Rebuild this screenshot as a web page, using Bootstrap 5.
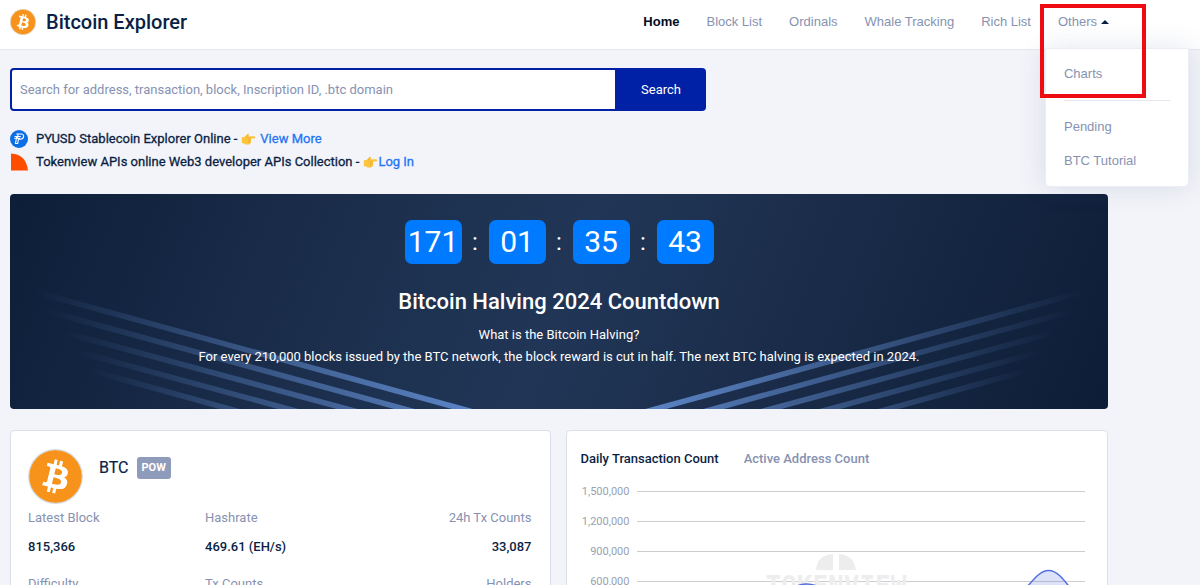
<!DOCTYPE html>
<html lang="en">
<head>
<meta charset="utf-8">
<meta name="viewport" content="width=device-width, initial-scale=1">
<title>Bitcoin Explorer</title>
<link href="https://cdn.jsdelivr.net/npm/bootstrap@5.3.0/dist/css/bootstrap.min.css" rel="stylesheet">
<style>
:root { --ink: #0b1f44; --muted: #8792b2; --page: #f3f4f9; --edge: #dcdfe9; --blue: #0021a5; }
body { font-family: Roboto, "Liberation Sans", sans-serif; font-size: 13px; line-height: 20px; color: var(--ink); background: var(--page); }
a { text-decoration: none; }
.site-header { background: #fff; border-bottom: 1px solid #e6e8ef; height: 50px; padding: 0 91px 6px 10px; }
.brand { font-size: 20px; font-weight: 500; line-height: 24px; color: var(--ink); gap: 10px; }
.site-nav { gap: 27px; font-family: "Liberation Sans", sans-serif; }
.site-nav a { color: var(--muted); }
.site-nav a.current { color: #000c22; font-weight: 700; }
.others-toggle::after { display: none; }
.caret-up { border: 4px solid transparent; border-top: 0; border-bottom: 4px solid var(--ink); margin-left: 4px; }
.others-menu { top: 36px; left: -13px; width: 144px; min-width: 0; padding: 14px 18px; border: 1px solid #eceef5; border-radius: 0 0 5px 5px; font-size: 13px; box-shadow: 0 0 28px rgba(60,75,130,.14); }
.others-menu .dropdown-item { padding: 0; line-height: 22px; background: none; color: var(--muted); }
.others-menu .dropdown-divider { margin: 15px 0; border-color: #e4e6ee; opacity: 1; }
.highlight-box { position: absolute; left: -18px; top: -8px; width: 106px; height: 94px; border: 4px solid #ee0c12; z-index: 1100; pointer-events: none; }
.page-main { padding: 18px 92px 0 10px; }
.search-form { max-width: 696px; height: 43px; }
.search-form .form-control { border: 2px solid var(--blue); border-radius: 4px 0 0 4px; padding: 0 8px; font-size: 13px; color: var(--ink); }
.search-form .form-control::placeholder { color: var(--muted); }
.search-form .btn { width: 90px; background: var(--blue); color: #fff; font-size: 13px; border-radius: 0 4px 4px 0; }
.notices { margin-top: 16px; -webkit-text-stroke: .3px; }
.notices li { line-height: 23px; }
.notices svg { flex: none; }
.notices a { color: #2474f6; }
.banner { margin-top: 21px; height: 215px; border-radius: 4px; color: #fff; background: linear-gradient(112deg, #0d1e38 0%, #1b2e4c 30%, #213657 50%, #1a2c49 70%, #0d1d37 100%); padding-top: 26px; }
.rays { position: absolute; inset: 0; width: 100%; height: 100%; }
.timer { gap: 10px; font-size: 30px; line-height: 44px; }
.timer-cell { width: 57px; border-radius: 7px; background: #007bff; }
.timer-colon { font-size: 24px; width: 7px; }
.banner h1 { font-size: 22px; line-height: 28px; font-weight: 500; margin: 24px 0 8px; }
.banner p { line-height: 22px; }
.panels { margin-top: 21px; display: grid; grid-template-columns: 541fr 543fr; gap: 15px; }
.panel { border: 1px solid var(--edge); border-radius: 4px; height: 330px; }
.coin-panel { padding: 18px 18px 0 17px; }
.coin-name { font-size: 16px; line-height: 22px; -webkit-text-stroke: .2px; }
.coin-tag { background: #8f9bba; font-size: 11px; line-height: 14px; padding: 4px 5px; border-radius: 3px; }
.stats { display: grid; grid-template-columns: 177px 1fr 1fr; row-gap: 17px; margin-top: 4px; }
.stats dt { font-weight: 400; color: var(--muted); }
.stats dd { font-weight: 500; margin: 9px 0 0; }
.chart-panel { padding: 18px 22px 0 14px; }
.chart-tabs { gap: 25px; font-weight: 500; }
.chart-tabs button { padding: 0; border: 0; background: none; font-weight: 500; color: var(--muted); }
.chart-tabs button.active { color: var(--ink); }
.chart-body { padding-top: 8px; }
.y-axis { width: 49px; font-size: 11px; line-height: 30px; color: #98a2b3; text-align: right; }
.plot { margin: 14px 0 0 8px; height: 240px; background: repeating-linear-gradient(#cdcdcf 0 1px, transparent 1px 30px); }
.plot svg.series { width: 100%; height: 100%; display: block; }
.watermark { position: absolute; top: 63px; left: 0; width: 397px; color: #ededee; text-align: center; font: 700 26px/28px "DejaVu Sans Mono", monospace; }
.watermark svg { display: block; margin: 0 auto 2px; }
</style>
</head>
<body class="vh-100 overflow-hidden">
<svg class="d-none">
  <symbol id="bitcoin" viewBox="0 0 32 32">
    <circle cx="16" cy="16" r="15.6" fill="#f7931a" stroke="#d8dbe0" stroke-width=".7"/>
    <path fill="#fff" d="M23.189 14.02c.314-2.096-1.283-3.223-3.465-3.975l.708-2.84-1.728-.43-.69 2.765c-.454-.114-.92-.22-1.385-.326l.695-2.783L15.596 6l-.708 2.839c-.376-.086-.746-.17-1.104-.26l.002-.009-2.384-.595-.46 1.846s1.283.294 1.256.312c.7.175.826.638.805 1.006l-.806 3.235c.048.012.11.03.18.057l-.183-.045-1.13 4.532c-.086.212-.303.531-.793.41.018.025-1.256-.313-1.256-.313l-.858 1.978 2.25.561c.418.105.828.215 1.231.318l-.715 2.872 1.727.43.708-2.84c.472.127.93.245 1.378.357l-.706 2.828 1.728.43.715-2.866c2.948.558 5.164.333 6.097-2.333.752-2.146-.037-3.385-1.588-4.192 1.13-.26 1.98-1.003 2.207-2.538zm-3.95 5.538c-.533 2.147-4.148.986-5.32.695l.95-3.805c1.172.293 4.929.872 4.37 3.11zm.535-5.569c-.487 1.953-3.495.96-4.47.717l.86-3.45c.975.243 4.118.696 3.61 2.733z"/>
  </symbol>
  <symbol id="point-right" viewBox="0 0 14 14">
    <path fill="#fdc43c" d="M.3 5.2 2.8 4.9 6 2.2q1.300-.8 1.600.3L7 4.300h5.700q1.100.2 1 1.200t-1.200 1H9.200q.9.900.3 1.900.6 1-.2 1.800.2 1.100-.9 1.500-.5 1-1.900.9-2.500.1-4-1.200L.3 11z"/>
    <path fill="none" stroke="#e8a52c" stroke-width=".6" d="M6 6.600h3.500M6.500 8.500h2.800M6.500 10.300h2.400M6 2.400 4.800 5.500"/>
  </symbol>
</svg>

<header class="site-header d-flex align-items-center justify-content-between">
  <a class="brand d-flex align-items-center" href="#"><svg width="26" height="26"><use href="#bitcoin"/></svg>Bitcoin Explorer</a>
  <nav class="site-nav d-flex">
    <a class="current" href="#">Home</a>
    <a href="#">Block List</a>
    <a href="#">Ordinals</a>
    <a href="#">Whale Tracking</a>
    <a href="#">Rich List</a>
    <div class="dropdown">
      <a class="others-toggle dropdown-toggle d-flex align-items-center" href="#" role="button" aria-expanded="true">Others<span class="caret-up"></span></a>
      <ul class="others-menu dropdown-menu show">
        <li><a class="dropdown-item" href="#">Charts</a></li>
        <li><hr class="dropdown-divider"></li>
        <li><a class="dropdown-item mb-2 pb-1" href="#">Pending</a></li>
        <li><a class="dropdown-item" href="#">BTC Tutorial</a></li>
      </ul>
      <span class="highlight-box"></span>
    </div>
  </nav>
</header>

<main class="page-main">
  <form class="search-form input-group" role="search">
    <input class="form-control shadow-none" type="text" aria-label="Search" placeholder="Search for address, transaction, block, Inscription ID, .btc domain">
    <button class="btn" type="button">Search</button>
  </form>

  <ul class="notices list-unstyled mb-0">
    <li class="d-flex align-items-center">
      <svg class="me-2" width="18" height="18" viewBox="0 0 18 18"><circle cx="9" cy="9" r="9" fill="#0a6fe6"/><path fill="none" stroke="#fff" stroke-width="1.100" d="M6.300 4h5q2.600.2 2.300 2.600-.4 2.500-3.100 2.600H8.400L7.700 13.500H5.500L6.700 6.500M4.600 6.500h6.200M4.200 8.300h6M8 4.500 7.400 8"/></svg>
      PYUSD Stablecoin Explorer Online - <svg class="ms-1 me-1" width="15" height="14"><use href="#point-right"/></svg><a href="#">View More</a>
    </li>
    <li class="d-flex align-items-center">
      <svg class="me-2" width="18" height="18" viewBox="0 0 18 18"><path fill="#ff4d00" d="M1 .5Q16 1 18 17.500H1z"/></svg>
      Tokenview APIs online Web3 developer APIs Collection - <svg class="ms-1" width="15" height="14"><use href="#point-right"/></svg><a href="#">Log In</a>
    </li>
  </ul>

  <section class="banner position-relative overflow-hidden text-center">
    <svg class="rays" viewBox="0 0 1098 215" preserveAspectRatio="none">
      <defs>
        <linearGradient id="ray"><stop offset="0" stop-color="#6490d6" stop-opacity="0"/><stop offset="1" stop-color="#6490d6" stop-opacity=".88"/></linearGradient>
        <g id="ray-set" fill="none" stroke="url(#ray)" stroke-width="5.500">
          <path d="M25 98 467 219"/>
          <path opacity=".82" d="M36 117 409 219"/>
          <path opacity=".66" d="M52 138 352 219"/>
          <path opacity=".52" d="M68 158 293 219"/>
          <path opacity=".42" d="M82 177 234 219"/>
        </g>
      </defs>
      <use href="#ray-set"/><use href="#ray-set" transform="matrix(-1 0 0 1 1098 0)"/>
    </svg>
    <div class="position-relative">
      <div class="timer d-flex justify-content-center">
        <span class="timer-cell">171</span><span class="timer-colon">:</span><span class="timer-cell">01</span><span class="timer-colon">:</span><span class="timer-cell">35</span><span class="timer-colon">:</span><span class="timer-cell">43</span>
      </div>
      <h1>Bitcoin Halving 2024 Countdown</h1>
      <p class="mb-0">What is the Bitcoin Halving?</p>
      <p class="mb-0">For every 210,000 blocks issued by the BTC network, the block reward is cut in half. The next BTC halving is expected in 2024.</p>
    </div>
  </section>

  <div class="panels">
    <section class="panel coin-panel bg-white">
      <div class="d-flex">
        <svg width="55" height="55"><use href="#bitcoin"/></svg>
        <div class="d-flex align-items-center align-self-start ms-3 mt-2 gap-2">
          <span class="coin-name">BTC</span><span class="coin-tag badge">POW</span>
        </div>
      </div>
      <dl class="stats">
        <div><dt>Latest Block</dt><dd>815,366</dd></div>
        <div><dt>Hashrate</dt><dd>469.61 (EH/s)</dd></div>
        <div class="text-end"><dt>24h Tx Counts</dt><dd>33,087</dd></div>
        <div><dt>Difficulty</dt></div>
        <div><dt>Tx Counts</dt></div>
        <div class="text-end"><dt>Holders</dt></div>
      </dl>
    </section>

    <section class="panel chart-panel bg-white">
      <div class="chart-tabs d-flex">
        <button class="active" type="button">Daily Transaction Count</button>
        <button type="button">Active Address Count</button>
      </div>
      <div class="chart-body d-flex">
        <div class="y-axis"><div>1,500,000</div><div>1,200,000</div><div>900,000</div><div>600,000</div></div>
        <div class="plot flex-fill position-relative">
          <div class="watermark">
            <svg width="40" height="16" viewBox="0 0 40 16" fill="#ededee"><path d="M0 16Q1 1 17 0V16zM23 0Q38 1 40 16H23z"/></svg>
            TOKENVIEW
          </div>
          <svg class="series position-relative" viewBox="0 0 448 240" preserveAspectRatio="none" fill="#5470e1" fill-opacity=".2" stroke="#5470e1" stroke-width="1.500">
            <path d="M120 130Q148 94 169 93T218 130"/>
            <path d="M374 115C396 90 402 79.500 412 79.500S428 90 448 115"/>
          </svg>
        </div>
      </div>
    </section>
  </div>
</main>
<script src="https://cdn.jsdelivr.net/npm/bootstrap@5.3.0/dist/js/bootstrap.bundle.min.js"></script>
</body>
</html>
